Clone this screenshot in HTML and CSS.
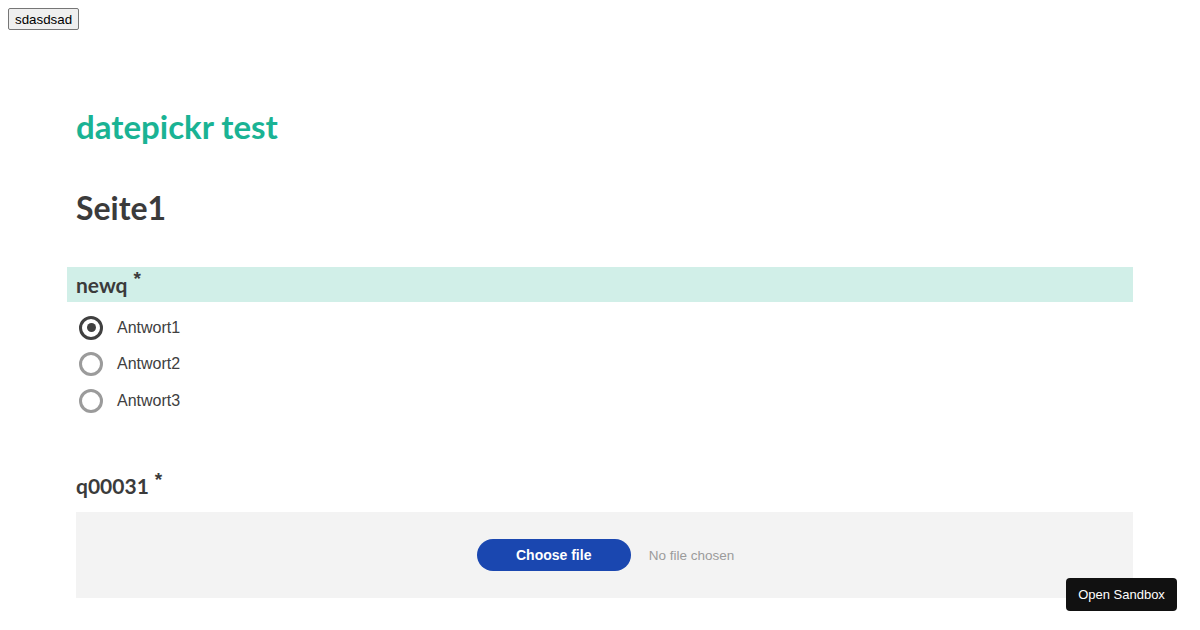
FILE: index.html
```html
<!DOCTYPE html>
<html lang="de">
<head>
<meta charset="utf-8">
<title>datepickr test</title>
<link rel="stylesheet" href="styles.css">
</head>
<body>
<button class="top-btn" type="button">sdasdsad</button>
<main class="survey">
  <h1 class="survey-title">datepickr test</h1>
  <h2 class="page-title">Seite1</h2>

  <section class="question">
    <h3 class="question-title question-title--active">newq <span class="req">*</span></h3>
    <div class="choices">
      <label class="choice">
        <span class="radio radio--checked"></span>
        <span class="choice-label">Antwort1</span>
      </label>
      <label class="choice">
        <span class="radio"></span>
        <span class="choice-label">Antwort2</span>
      </label>
      <label class="choice">
        <span class="radio"></span>
        <span class="choice-label">Antwort3</span>
      </label>
    </div>
  </section>

  <section class="question question--file">
    <h3 class="question-title">q00031 <span class="req">*</span></h3>
    <div class="file-box">
      <span class="file-btn">Choose file</span>
      <span class="file-status">No file chosen</span>
    </div>
  </section>
</main>
<a class="sandbox-btn" href="#">Open Sandbox</a>
</body>
</html>
```

FILE: styles.css
```css
html, body {
  margin: 0;
  padding: 0;
  background: #fff;
}
body {
  padding: 8px;
  font-family: "Liberation Sans", Arial, sans-serif;
}
.top-btn {
  display: block;
  font-family: "Liberation Sans", Arial, sans-serif;
  font-size: 13.33px;
  height: 22px;
  padding: 1px 6px;
  color: #000;
  background: #efefef;
  border: 1px solid #767676;
  border-radius: 2px;
}
.survey {
  margin: 0 59px;
}
.survey-title {
  margin: 0;
  padding: 77px 0 0 9px;
  font-family: Lato, "Open Sans", sans-serif;
  font-weight: 700;
  font-size: 33px;
  line-height: 38px;
  color: #1ab394;
}
.page-title {
  margin: 0;
  padding: 44px 0 0 9px;
  font-family: Lato, "Open Sans", sans-serif;
  font-weight: 700;
  font-size: 32px;
  line-height: 38px;
  color: #3b3b3b;
}
.question {
  margin-top: 40px;
}
.question-title {
  margin: 0;
  padding: 0 9px;
  height: 35px;
  display: flex;
  align-items: center;
  font-family: Lato, "Open Sans", sans-serif;
  font-weight: 700;
  font-size: 21px;
  color: #3b3b3b;
}
.question-title--active {
  background: #d1efe8;
}
.req {
  font-family: "Liberation Sans", Arial, sans-serif;
  font-size: 19px;
  line-height: 19px;
  align-self: flex-start;
  margin-top: 2px;
  margin-left: 6px;
}
.choices {
  display: flex;
  flex-direction: column;
  gap: 13.5px;
  padding: 14px 0 0 12px;
}
.choice {
  display: flex;
  align-items: center;
  gap: 14px;
  height: 23px;
  font-size: 16px;
  color: #404040;
}
.radio {
  box-sizing: border-box;
  width: 24px;
  height: 24px;
  border-radius: 50%;
  border: 3px solid #9b9b9b;
  display: flex;
  align-items: center;
  justify-content: center;
}
.radio--checked {
  border-color: #404040;
}
.radio--checked::after {
  content: "";
  width: 9px;
  height: 9px;
  border-radius: 50%;
  background: #404040;
}
.question--file {
  margin-top: 56px;
}
.file-box {
  margin: 9px 0 0 9px;
  height: 86px;
  background: #f3f3f3;
  display: flex;
  align-items: center;
  justify-content: center;
  gap: 18px;
}
.file-btn {
  width: 154px;
  height: 32px;
  border-radius: 16px;
  background: #1a47b0;
  color: #fff;
  font-weight: 700;
  font-size: 14px;
  display: flex;
  align-items: center;
  justify-content: center;
}
.file-status {
  font-size: 13.5px;
  color: #9b9b9b;
  margin-right: -2px;
}
.sandbox-btn {
  position: fixed;
  right: 23px;
  bottom: 19px;
  width: 111px;
  height: 33px;
  box-sizing: border-box;
  display: flex;
  align-items: center;
  justify-content: center;
  background: #111;
  color: #fff;
  border-radius: 4px;
  font-size: 13px;
  text-decoration: none;
}
```
